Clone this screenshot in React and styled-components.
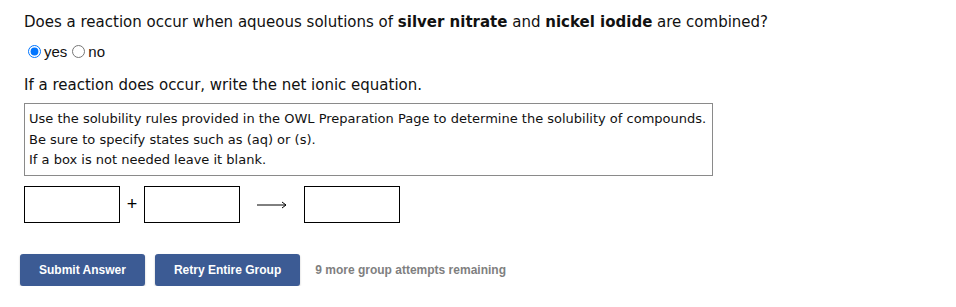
import React from "react";
import styled, { createGlobalStyle } from "styled-components";

const Global = createGlobalStyle`
  html, body { margin: 0; padding: 0; background: #fff; }
  body { font-family: "DejaVu Sans", Verdana, sans-serif; color: #111; }
`;

const Page = styled.div`
  padding: 12px 24px 0 24px;
  display: flex;
  flex-direction: column;
`;

const Question = styled.p`
  margin: 0;
  font-size: 15px;
  line-height: 20px;
  color: #111;
  b { font-weight: bold; }
`;

const RadioRow = styled.div`
  display: flex;
  align-items: center;
  margin-top: 10px;
  padding-left: 3px;
  font-family: "Liberation Sans", Arial, sans-serif;
  font-size: 15px;
  height: 18px;
`;

const RadioLabel = styled.label`
  display: inline-flex;
  align-items: center;
  margin-right: 4px;
  input { margin: 0 3px 0 1px; width: 13px; height: 13px; }
`;

const Prompt = styled.p`
  margin: 15px 0 0 0;
  font-size: 15px;
  line-height: 20px;
`;

const Notes = styled.div`
  margin-top: 8px;
  width: 689px;
  border: 1px solid #8a8a8a;
  padding: 5px 4px 4px 4px;
  font-size: 13px;
  line-height: 20.5px;
  color: #111;
  box-sizing: border-box;
  height: 73px;
`;

const Equation = styled.div`
  display: flex;
  align-items: center;
  margin-top: 10px;
  height: 37px;
`;

const Field = styled.input`
  width: 96px;
  height: 37px;
  box-sizing: border-box;
  border: 1.5px solid #000;
  margin: 0;
  padding: 0 4px;
  font-size: 14px;
  background: #fff;
`;

const Plus = styled.span`
  font-family: "Liberation Sans", Arial, sans-serif;
  font-size: 18px;
  width: 24px;
  text-align: center;
  color: #000;
`;

const Arrow = styled.span`
  display: flex;
  align-items: center;
  justify-content: center;
  width: 64px;
  height: 37px;
`;

const Actions = styled.div`
  display: flex;
  align-items: center;
  margin-top: 31px;
  margin-left: -4px;
  gap: 10px;
`;

const Button = styled.button`
  height: 32px;
  padding: 0 ${(p) => p.$pad}px;
  border: none;
  border-radius: 3px;
  background: #3c5b94;
  color: #fff;
  font-family: "Liberation Sans", Arial, sans-serif;
  font-weight: bold;
  font-size: 12px;
  box-shadow: 0 1px 2px rgba(0, 0, 0, 0.25);
  cursor: pointer;
`;

const Remaining = styled.span`
  margin-left: 5px;
  font-family: "Liberation Sans", Arial, sans-serif;
  font-weight: bold;
  font-size: 12px;
  color: #7f7f7f;
`;

export default function App() {
  return (
    <>
      <Global />
      <Page>
        <Question>
          Does a reaction occur when aqueous solutions of <b>silver nitrate</b> and{" "}
          <b>nickel iodide</b> are combined?
        </Question>
        <RadioRow>
          <RadioLabel>
            <input type="radio" name="occur" defaultChecked />
            yes
          </RadioLabel>
          <RadioLabel>
            <input type="radio" name="occur" />
            no
          </RadioLabel>
        </RadioRow>
        <Prompt>If a reaction does occur, write the net ionic equation.</Prompt>
        <Notes>
          Use the solubility rules provided in the OWL Preparation Page to determine the solubility of compounds.
          <br />
          Be sure to specify states such as (aq) or (s).
          <br />
          If a box is not needed leave it blank.
        </Notes>
        <Equation>
          <Field type="text" />
          <Plus>+</Plus>
          <Field type="text" />
          <Arrow>
            <svg width="32" height="10" viewBox="0 0 32 10">
              <line x1="1" y1="5" x2="30" y2="5" stroke="#000" strokeWidth="1" />
              <path d="M26 2 L30 5 L26 8" fill="none" stroke="#000" strokeWidth="1" />
            </svg>
          </Arrow>
          <Field type="text" />
        </Equation>
        <Actions>
          <Button $pad={19}>Submit Answer</Button>
          <Button $pad={19}>Retry Entire Group</Button>
          <Remaining>9 more group attempts remaining</Remaining>
        </Actions>
      </Page>
    </>
  );
}
